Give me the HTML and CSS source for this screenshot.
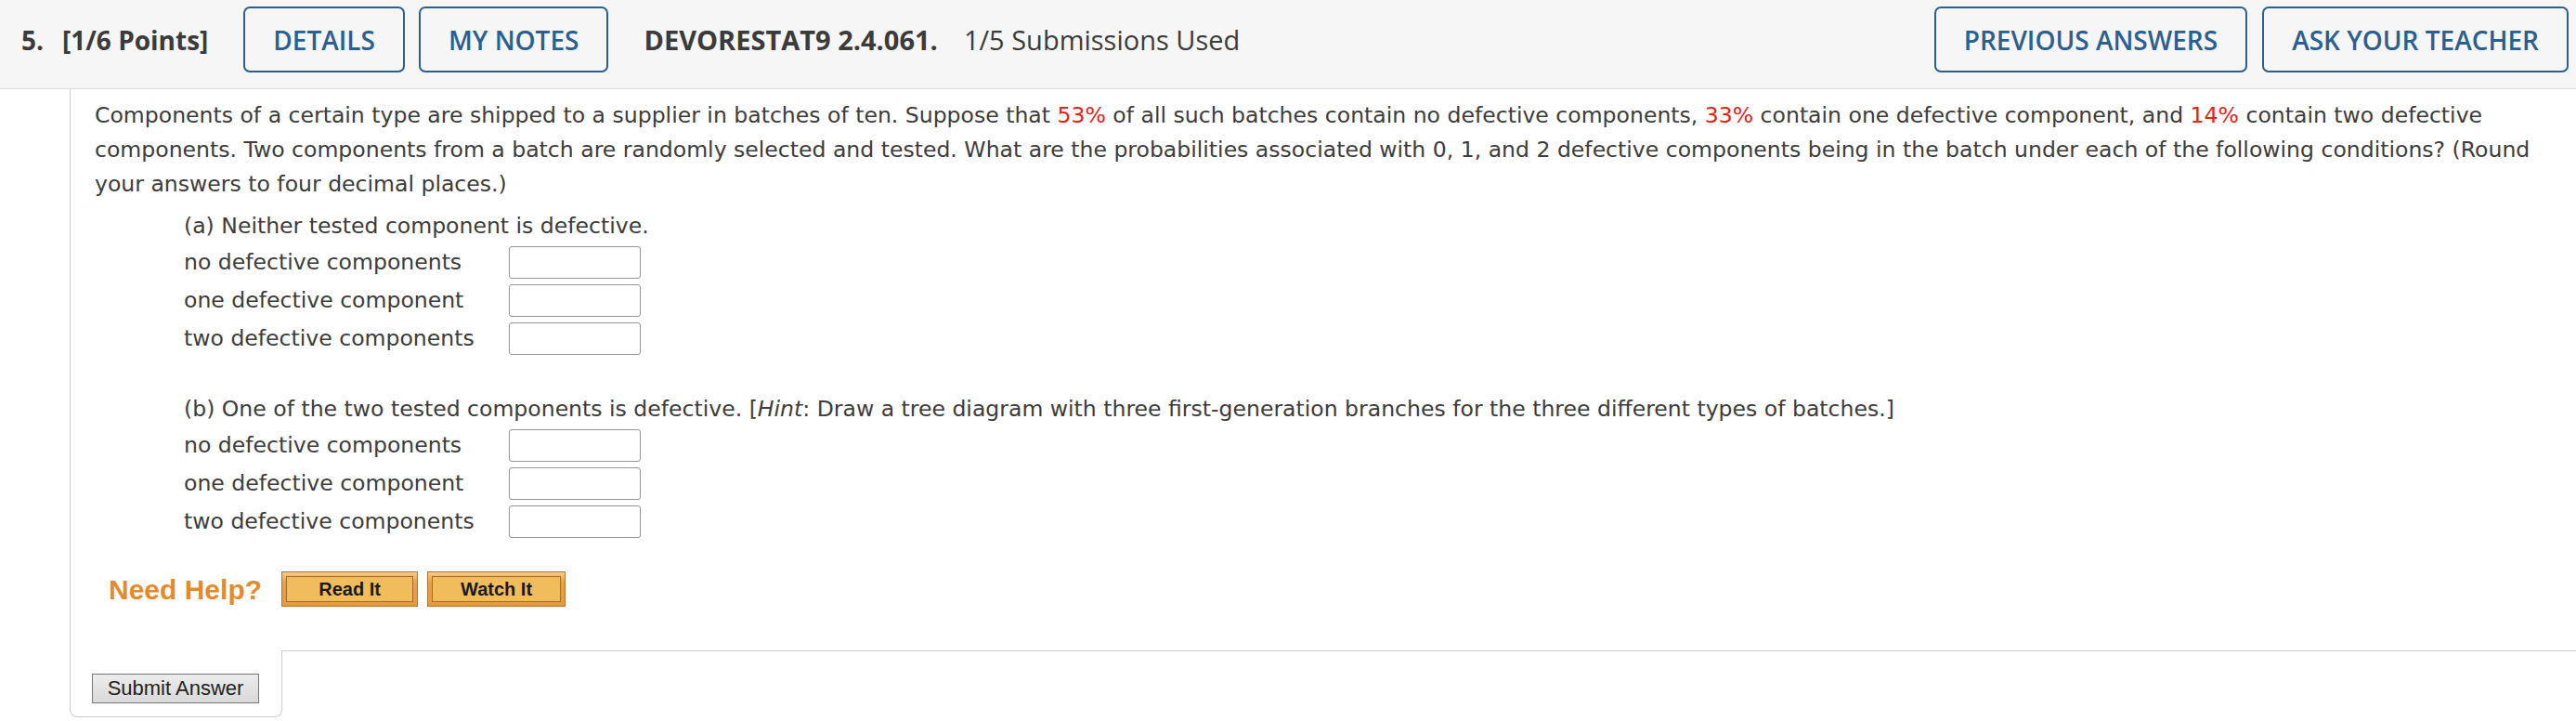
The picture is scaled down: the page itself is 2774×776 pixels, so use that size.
FILE: index.html
```html
<!DOCTYPE html>
<html>
<head>
<meta charset="utf-8">
<link rel="stylesheet" href="styles.css">
</head>
<body>
<div class="qhead">
  <span class="qnum">5.</span>
  <span class="qpts">[1/6 Points]</span>
  <button class="hbtn">DETAILS</button>
  <button class="hbtn">MY NOTES</button>
  <span class="qcode">DEVORESTAT9 2.4.061.</span>
  <span class="qsub">1/5 Submissions Used</span>
  <div class="hright">
    <button class="hbtn">PREVIOUS ANSWERS</button>
    <button class="hbtn">ASK YOUR TEACHER</button>
  </div>
</div>
<div class="qbody">
  <div class="qcontent">
    <p class="stem">Components of a certain type are shipped to a supplier in batches of ten. Suppose that <span class="red">53%</span> of all such batches contain no defective components, <span class="red">33%</span> contain one defective component, and <span class="red">14%</span> contain two defective components. Two components from a batch are randomly selected and tested. What are the probabilities associated with 0, 1, and 2 defective components being in the batch under each of the following conditions? (Round your answers to four decimal places.)</p>
    <div class="part">
      <div class="part-title">(a) Neither tested component is defective.</div>
      <div class="row"><span class="lbl">no defective components</span><input class="ans" type="text"></div>
      <div class="row"><span class="lbl">one defective component</span><input class="ans" type="text"></div>
      <div class="row"><span class="lbl">two defective components</span><input class="ans" type="text"></div>
    </div>
    <div class="part part-b">
      <div class="part-title">(b) One of the two tested components is defective. [<i>Hint</i>: Draw a tree diagram with three first-generation branches for the three different types of batches.]</div>
      <div class="row"><span class="lbl">no defective components</span><input class="ans" type="text"></div>
      <div class="row"><span class="lbl">one defective component</span><input class="ans" type="text"></div>
      <div class="row"><span class="lbl">two defective components</span><input class="ans" type="text"></div>
    </div>
    <div class="help">
      <span class="help-label">Need Help?</span>
      <span class="help-btn"><span class="help-inner">Read It</span></span>
      <span class="help-btn wide"><span class="help-inner">Watch It</span></span>
    </div>
  </div>
  <div class="qfoot">
    <div class="submit-tab"><button class="submit">Submit Answer</button></div>
    <div class="foot-fill"></div>
  </div>
</div>
</body>
</html>
```
FILE: styles.css
```css
html, body {
  margin: 0;
  padding: 0;
  background: #ffffff;
}

.qhead {
  display: flex;
  align-items: center;
  box-sizing: border-box;
  height: 96px;
  padding: 7px 8px 17px 23px;
  background: #f6f6f6;
  border-bottom: 1px solid #dddddd;
  font-family: "Open Sans", sans-serif;
  font-size: 28px;
  color: #3b3b3b;
}

.qnum {
  font-weight: 700;
  margin-right: 20px;
}

.qpts {
  font-weight: 700;
  margin-right: 38px;
}

.hbtn {
  box-sizing: border-box;
  height: 71px;
  padding: 0 30px;
  border: 2px solid #2b5e91;
  border-radius: 7px;
  background: #f6f6f6;
  color: #2b5e91;
  font-family: "Open Sans", sans-serif;
  font-weight: 600;
  font-size: 28px;
  margin-right: 15px;
}

.qcode {
  font-weight: 700;
  font-size: 29px;
  margin-left: 23px;
  margin-right: 28px;
}

.qsub {
  font-weight: 400;
  font-size: 29px;
}

.hright {
  margin-left: auto;
  display: flex;
  gap: 16px;
}

.hright .hbtn {
  margin-right: 0;
}

.qbody {
  margin-left: 75px;
  font-family: "DejaVu Sans", Verdana, sans-serif;
  font-size: 23.55px;
  line-height: 37px;
  color: #3c3c3c;
}

.qcontent {
  box-sizing: border-box;
  height: 604px;
  border-left: 1px solid #cccccc;
  padding: 10px 20px 0 26px;
}

.stem {
  margin: 0;
}

.red {
  color: #e2231a;
}

.part {
  margin-left: 96px;
  margin-top: 8px;
}

.part-b {
  margin-top: 37px;
}

.row {
  display: flex;
  align-items: center;
  height: 41px;
}

.lbl {
  width: 350px;
}

.ans {
  box-sizing: border-box;
  width: 142px;
  height: 35px;
  margin: 0;
  border: 1px solid #959595;
  border-radius: 3px;
  background: #ffffff;
}

.help {
  display: flex;
  align-items: center;
  margin-top: 33px;
  margin-left: 15px;
}

.help-label {
  font-family: "Liberation Sans", Arial, sans-serif;
  font-weight: 700;
  font-size: 30px;
  color: #e38b2c;
  margin-right: 21px;
}

.help-btn {
  box-sizing: border-box;
  display: flex;
  width: 147px;
  height: 38px;
  padding: 4px;
  border: 1px solid #b4752f;
  background: linear-gradient(#f7c98a, #e7a14a 30%, #e39a43);
  margin-right: 10px;
}

.help-btn.wide {
  width: 149px;
}

.help-inner {
  flex: 1;
  display: flex;
  align-items: center;
  justify-content: center;
  border: 1px solid #a46b2c;
  background: #f1bd5c;
  font-family: "Liberation Sans", Arial, sans-serif;
  font-weight: 700;
  font-size: 20px;
  line-height: 1;
  color: #1a1a1a;
}

.qfoot {
  display: flex;
}

.submit-tab {
  box-sizing: border-box;
  width: 229px;
  height: 72px;
  padding: 22px 0 0 23px;
  border: 1px solid #cccccc;
  border-top: none;
  border-radius: 0 0 8px 8px;
}

.submit {
  box-sizing: border-box;
  width: 180px;
  height: 32px;
  padding: 0;
  border: 1px solid #777777;
  background: linear-gradient(#ececec, #d9d9d9);
  font-family: "Liberation Sans", Arial, sans-serif;
  font-size: 22px;
  color: #222222;
}

.foot-fill {
  flex: 1;
  border-top: 1px solid #cccccc;
}
```
